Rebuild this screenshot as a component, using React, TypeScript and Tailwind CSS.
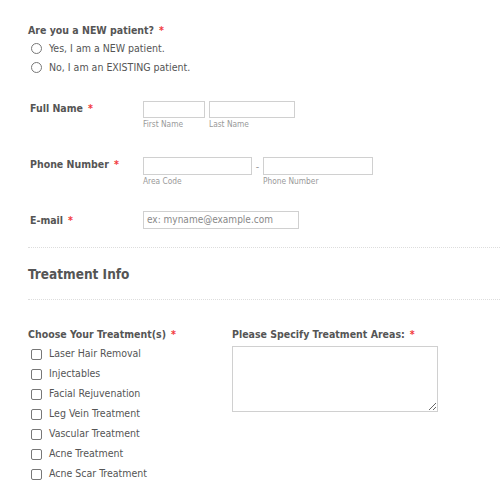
import React from 'react';

const font = { fontFamily: '"DejaVu Sans Condensed", "DejaVu Sans", Verdana, sans-serif' };

function Req() {
  return <span className="text-[#f23a3c] ml-[5px]">*</span>;
}

function Radio({ label }: { label: string }) {
  return (
    <label className="flex items-center h-[19px]">
      <span className="w-[11px] h-[11px] rounded-full border border-[#777] ml-[3px] mr-[7px] bg-white shrink-0" />
      <span>{label}</span>
    </label>
  );
}

function Check({ label }: { label: string }) {
  return (
    <label className="flex items-center h-[20px]">
      <span className="w-[11px] h-[11px] rounded-[2px] border border-[#777] ml-[3px] mr-[7px] bg-white shrink-0" />
      <span>{label}</span>
    </label>
  );
}

function Field({ w, h = 'h-[18px]', placeholder }: { w: string; h?: string; placeholder?: string }) {
  return (
    <div
      className={`${w} ${h} border border-[#d0d0d0] bg-white px-[3px] text-[10px] text-[#888] leading-[16px] whitespace-nowrap`}
    >
      {placeholder}
    </div>
  );
}

function Sub({ children }: { children: React.ReactNode }) {
  return <div className="text-[8.3px] text-[#999] mt-[1px] h-[10px] leading-[10px] whitespace-nowrap">{children}</div>;
}

const treatments = [
  'Laser Hair Removal',
  'Injectables',
  'Facial Rejuvenation',
  'Leg Vein Treatment',
  'Vascular Treatment',
  'Acne Treatment',
  'Acne Scar Treatment',
];

export default function App() {
  return (
    <div style={font} className="w-[500px] h-[484px] bg-white text-[10.5px] text-[#555] overflow-hidden pl-[28px]">
      <div className="pt-[23px]">
        <div className="font-bold h-[14px] leading-[14px]">
          Are you a NEW patient?<Req />
        </div>
        <div className="mt-[2px]">
          <Radio label="Yes, I am a NEW patient." />
          <Radio label="No, I am an EXISTING patient." />
        </div>
      </div>

      <div className="flex mt-[24px] pl-[2px]">
        <div className="w-[113px] font-bold h-[14px] leading-[14px]">
          Full Name<Req />
        </div>
        <div className="flex gap-[4px]">
          <div>
            <Field w="w-[62px]" h="h-[17px]" />
            <Sub>First Name</Sub>
          </div>
          <div>
            <Field w="w-[86px]" h="h-[17px]" />
            <Sub>Last Name</Sub>
          </div>
        </div>
      </div>

      <div className="flex mt-[28px] pl-[2px]">
        <div className="w-[113px] font-bold h-[14px] leading-[14px]">
          Phone Number<Req />
        </div>
        <div className="flex">
          <div>
            <Field w="w-[109px]" />
            <Sub>Area Code</Sub>
          </div>
          <div className="w-[11px] text-center leading-[18px] text-[#999]">-</div>
          <div>
            <Field w="w-[110px]" />
            <Sub>Phone Number</Sub>
          </div>
        </div>
      </div>

      <div className="flex mt-[25px] pl-[2px]">
        <div className="w-[113px] font-bold h-[14px] leading-[14px] mt-[2px]">
          E-mail<Req />
        </div>
        <Field w="w-[156px]" placeholder="ex: myname@example.com" />
      </div>

      <div className="mt-[18px] border-t border-dotted border-[#ddd]" />
      <div className="pt-[18px] text-[13.5px] font-bold h-[51px] leading-[16px]">Treatment Info</div>
      <div className="border-t border-dotted border-[#ddd]" />

      <div className="flex mt-[27px]">
        <div className="w-[204px]">
          <div className="font-bold h-[14px] leading-[14px]">
            Choose Your Treatment(s)<Req />
          </div>
          <div className="mt-[3px]">
            {treatments.map(t => (
              <Check key={t} label={t} />
            ))}
          </div>
        </div>
        <div>
          <div className="font-bold h-[14px] leading-[14px]">
            Please Specify Treatment Areas:<Req />
          </div>
          <textarea className="mt-[5px] block w-[206px] h-[66px] border border-[#d0d0d0] bg-white resize-y" />
        </div>
      </div>
    </div>
  );
}
